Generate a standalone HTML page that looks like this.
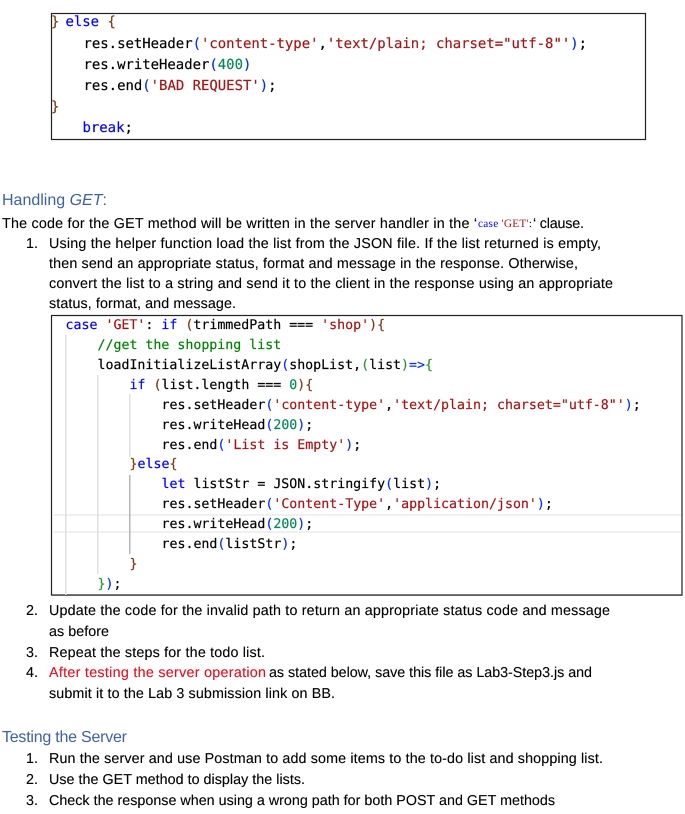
<!DOCTYPE html>
<html>
<head>
<meta charset="utf-8">
<style>
html,body{margin:0;padding:0;background:#fff;width:685px;height:814px;overflow:hidden}
svg{display:block;filter:blur(0.35px)}
text{white-space:pre;text-rendering:geometricPrecision}
.b{font-family:"Liberation Sans",sans-serif;font-size:14.3px;fill:#000;stroke:#000;stroke-width:.12px}
.h{font-family:"Liberation Sans",sans-serif;font-size:16px;fill:#3f63a0}
.s{font-family:"Liberation Serif",serif;font-size:11.3px;stroke-width:0}
.m1{font-family:"DejaVu Sans Mono",monospace;font-size:13.95px;fill:#000;stroke:#000;stroke-width:.18px}
.m2{font-family:"DejaVu Sans Mono",monospace;font-size:13.27px;fill:#000;stroke:#000;stroke-width:.18px}
.k{fill:#0000ff;stroke:#0000ff}.t{fill:#a31515;stroke:#a31515}.p{fill:#0431fa;stroke:#0431fa}.g{fill:#319331;stroke:#319331}.n{fill:#098658;stroke:#098658}.c{fill:#008000;stroke:#008000}.r{fill:#7b3814;stroke:#7b3814}
.red{fill:#e01020;stroke:#e01020}
</style>
</head>
<body>
<svg width="685" height="814" viewBox="0 0 685 814" xmlns="http://www.w3.org/2000/svg">
<rect x="52" y="14" width="594" height="126" fill="#ccc"/>
<rect x="51.5" y="13.5" width="594" height="126" fill="#fff" stroke="#222" stroke-width="1.2"/>
<text class="m1" x="51" y="26"><tspan class="r">}</tspan></text>
<text class="m1" x="65.5" y="26"><tspan class="k">else</tspan> <tspan class="r">{</tspan></text>
<text class="m1" x="83.5" y="48">res.setHeader<tspan class="p">(</tspan><tspan class="t">'content-type'</tspan>,<tspan class="t">'text/plain; charset="utf-8"'</tspan><tspan class="p">)</tspan>;</text>
<text class="m1" x="83.5" y="69">res.writeHeader<tspan class="p">(</tspan><tspan class="n">400</tspan><tspan class="p">)</tspan></text>
<text class="m1" x="83.5" y="90">res.end<tspan class="p">(</tspan><tspan class="t">'BAD REQUEST'</tspan><tspan class="p">)</tspan>;</text>
<text class="m1" x="51" y="111"><tspan class="r">}</tspan></text>
<text class="m1" x="82.5" y="132"><tspan class="k">break</tspan>;</text>

<text class="h" x="2" y="205">Handling <tspan font-style="italic">GET</tspan>:</text>
<text class="b" x="2" y="228" textLength="475" lengthAdjust="spacing">The code for the GET method will be written in the server handler in the ‘</text>
<text class="s" x="478" y="227" textLength="54" lengthAdjust="spacing"><tspan class="k">case</tspan> <tspan class="t">'GET'</tspan>:</text>
<text class="b" x="533" y="228" textLength="51" lengthAdjust="spacing">‘ clause.</text>

<text class="b" x="26" y="248">1.</text>
<text class="b" x="49" y="248" textLength="552" lengthAdjust="spacing">Using the helper function load the list from the JSON file. If the list returned is empty,</text>
<text class="b" x="49" y="268" textLength="529" lengthAdjust="spacing">then send an appropriate status, format and message in the response. Otherwise,</text>
<text class="b" x="49" y="288" textLength="564" lengthAdjust="spacing">convert the list to a string and send it to the client in the response using an appropriate</text>
<text class="b" x="49" y="308" textLength="187" lengthAdjust="spacing">status, format, and message.</text>

<rect x="52" y="316" width="630.5" height="280" fill="#bbb"/>
<rect x="51.5" y="315.5" width="630.5" height="279.5" fill="#fff" stroke="#222" stroke-width="1.2"/>
<rect x="52" y="514" width="629" height="2" fill="#f0f0f0"/>
<rect x="52" y="531" width="629" height="2" fill="#f0f0f0"/>
<rect x="65" y="335" width="1.5" height="260" fill="#e0e0e0"/>
<rect x="97" y="375" width="1.5" height="199" fill="#e0e0e0"/>
<rect x="129" y="394" width="1.5" height="63" fill="#e0e0e0"/>
<rect x="129" y="475" width="1.5" height="79" fill="#b5b5b5"/>

<text class="m2" x="65.5" y="329"><tspan class="k">case</tspan> <tspan class="t">'GET'</tspan>: <tspan class="k">if</tspan> <tspan class="r">(</tspan>trimmedPath === <tspan class="t">'shop'</tspan><tspan class="r">){</tspan></text>
<text class="m2" x="97.5" y="349"><tspan class="c">//get the shopping list</tspan></text>
<text class="m2" x="97.5" y="369">loadInitializeListArray<tspan class="p">(</tspan>shopList,<tspan class="g">(</tspan>list<tspan class="g">)</tspan><tspan class="p">=&gt;</tspan><tspan class="g">{</tspan></text>
<text class="m2" x="129.5" y="389"><tspan class="k">if</tspan> <tspan class="r">(</tspan>list.length === <tspan class="n">0</tspan><tspan class="r">){</tspan></text>
<text class="m2" x="161.5" y="409">res.setHeader<tspan class="p">(</tspan><tspan class="t">'content-type'</tspan>,<tspan class="t">'text/plain; charset="utf-8"'</tspan><tspan class="p">)</tspan>;</text>
<text class="m2" x="161.5" y="429">res.writeHead<tspan class="p">(</tspan><tspan class="n">200</tspan><tspan class="p">)</tspan>;</text>
<text class="m2" x="161.5" y="449">res.end<tspan class="p">(</tspan><tspan class="t">'List is Empty'</tspan><tspan class="p">)</tspan>;</text>
<text class="m2" x="129.5" y="468"><tspan class="r">}</tspan><tspan class="k">else</tspan><tspan class="r">{</tspan></text>
<text class="m2" x="161.5" y="488"><tspan class="k">let</tspan> listStr = JSON.stringify<tspan class="p">(</tspan>list<tspan class="p">)</tspan>;</text>
<text class="m2" x="161.5" y="508">res.setHeader<tspan class="p">(</tspan><tspan class="t">'Content-Type'</tspan>,<tspan class="t">'application/json'</tspan><tspan class="p">)</tspan>;</text>
<text class="m2" x="161.5" y="528">res.writeHead<tspan class="p">(</tspan><tspan class="n">200</tspan><tspan class="p">)</tspan>;</text>
<text class="m2" x="161.5" y="548">res.end<tspan class="p">(</tspan>listStr<tspan class="p">)</tspan>;</text>
<text class="m2" x="129.5" y="568"><tspan class="r">}</tspan></text>
<text class="m2" x="97.5" y="588"><tspan class="g">}</tspan><tspan class="p">)</tspan>;</text>

<text class="b" x="26" y="615">2.</text>
<text class="b" x="49" y="615" textLength="561" lengthAdjust="spacing">Update the code for the invalid path to return an appropriate status code and message</text>
<text class="b" x="49" y="636" textLength="60" lengthAdjust="spacing">as before</text>
<text class="b" x="26" y="657">3.</text>
<text class="b" x="49" y="657" textLength="216" lengthAdjust="spacing">Repeat the steps for the todo list.</text>
<text class="b" x="26" y="677">4.</text>
<text class="b red" x="49" y="677" textLength="217" lengthAdjust="spacing">After testing the server operation</text>
<text class="b" x="269" y="677" textLength="323" lengthAdjust="spacing">as stated below, save this file as Lab3-Step3.js and</text>
<text class="b" x="49" y="698" textLength="286" lengthAdjust="spacing">submit it to the Lab 3 submission link on BB.</text>

<text class="h" x="2" y="742" textLength="125" lengthAdjust="spacing">Testing the Server</text>
<text class="b" x="26" y="763">1.</text>
<text class="b" x="49" y="763" textLength="554" lengthAdjust="spacing">Run the server and use Postman to add some items to the to-do list and shopping list.</text>
<text class="b" x="26" y="784">2.</text>
<text class="b" x="49" y="784" textLength="256" lengthAdjust="spacing">Use the GET method to display the lists.</text>
<text class="b" x="26" y="805">3.</text>
<text class="b" x="49" y="805" textLength="506" lengthAdjust="spacing">Check the response when using a wrong path for both POST and GET methods</text>
</svg>
</body>
</html>
